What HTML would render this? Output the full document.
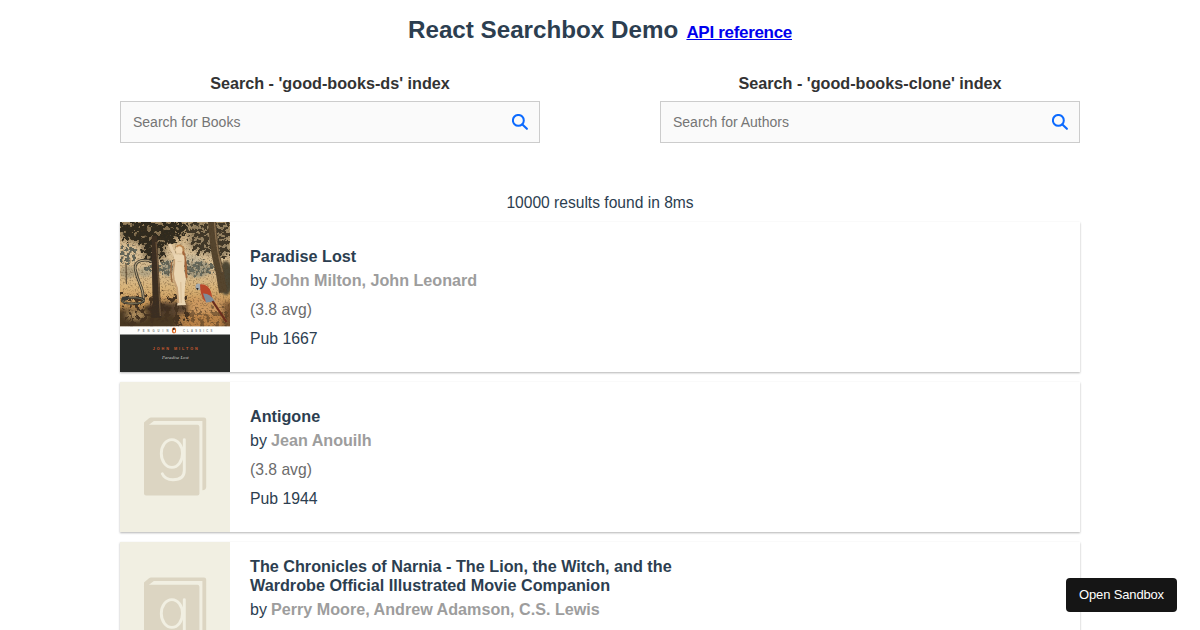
<!DOCTYPE html>
<html>
<head>
<meta charset="utf-8">
<title>React Searchbox Demo</title>
<style>
*{box-sizing:border-box;}
html,body{margin:0;padding:0;background:#fff;}
body{width:1200px;height:630px;overflow:hidden;position:relative;font-family:"Liberation Sans",sans-serif;color:#2c3e50;font-size:16px;}
h2{margin:0;position:absolute;left:0;width:1200px;top:16px;text-align:center;font-size:24.2px;line-height:28px;font-weight:bold;color:#2c3e50;white-space:nowrap;}
h2 a{font-size:17px;letter-spacing:-0.31px;color:#0000ee;text-decoration:underline;text-decoration-thickness:1.3px;font-weight:bold;margin-left:1.5px;}
.col{position:absolute;top:72px;width:420px;}
.col.l{left:120px;}
.col.r{left:660px;}
.col h3{margin:0;font-size:16.2px;line-height:22px;text-align:center;font-weight:bold;color:#333;white-space:nowrap;}
.inp{margin-top:7px;height:42px;border:1px solid #ccc;background:#fafafa;position:relative;}
.inp span{position:absolute;left:12px;top:0;line-height:40px;font-size:14px;color:#757575;}
.inp svg{position:absolute;right:9px;top:12px;}
.res{position:absolute;left:0;width:1200px;top:193px;text-align:center;line-height:20px;font-size:15.6px;color:#2c3e50;}
.card{position:absolute;left:120px;width:960px;height:150px;background:#fff;box-shadow:0 1px 2px 0 rgba(0,0,0,0.3);}
.card .img{position:absolute;left:0;top:0;width:110px;height:150px;background:#f1efe2;overflow:hidden;}
.card .img svg{display:block;}
.card .txt{position:absolute;left:130px;top:0;width:460px;}
.t{font-weight:bold;font-size:16.2px;line-height:19px;color:#2c3e50;}
.by{font-size:16px;line-height:19px;color:#2c3e50;margin-top:5px;}
.by b{color:#9d9d9d;font-size:16.15px;margin-left:-0.4px;}
.avg{font-size:15.7px;line-height:19px;color:#6b6b6b;margin-top:10px;}
.pub{font-size:15.8px;line-height:19px;color:#2c3e50;margin-top:10px;}
.sb{position:absolute;left:1066px;top:578px;width:111px;height:34px;background:#151515;border-radius:4px;color:#fff;font-size:13px;line-height:34px;text-align:center;letter-spacing:-0.15px;}
</style>
</head>
<body>
<h2>React Searchbox Demo <a>API reference</a></h2>
<div class="col l"><h3>Search - 'good-books-ds' index</h3><div class="inp"><span>Search for Books</span><svg width="18" height="18" viewBox="0 0 18 18"><circle cx="6.35" cy="6.4" r="5.45" fill="none" stroke="#0b6aff" stroke-width="2"/><path d="M10.4 10.4L14.9 14.8" stroke="#0b6aff" stroke-width="2.1" stroke-linecap="round"/></svg></div></div>
<div class="col r"><h3>Search - 'good-books-clone' index</h3><div class="inp"><span>Search for Authors</span><svg width="18" height="18" viewBox="0 0 18 18"><circle cx="6.35" cy="6.4" r="5.45" fill="none" stroke="#0b6aff" stroke-width="2"/><path d="M10.4 10.4L14.9 14.8" stroke="#0b6aff" stroke-width="2.1" stroke-linecap="round"/></svg></div></div>
<div class="res">10000 results found in 8ms</div>

<div class="card" style="top:222px"><div class="img" id="cover"><svg width="110" height="150" viewBox="0 0 110 150"><defs><filter id="b1" x="-20%" y="-20%" width="140%" height="140%"><feGaussianBlur stdDeviation="1.2"/></filter><filter id="b2" x="-20%" y="-20%" width="140%" height="140%"><feGaussianBlur stdDeviation="0.45"/></filter><filter id="b3" x="-30%" y="-30%" width="160%" height="160%"><feGaussianBlur stdDeviation="2.5"/></filter><filter id="lfA" x="-10%" y="-10%" width="120%" height="120%" color-interpolation-filters="sRGB"><feGaussianBlur in="SourceAlpha" stdDeviation="2" result="m"/><feTurbulence type="fractalNoise" baseFrequency="0.22" numOctaves="3" seed="11" result="n"/><feColorMatrix in="n" type="matrix" values="0 0 0 0 0  0 0 0 0 0  0 0 0 0 0  3 0 0 0 -1.0" result="na"/><feComposite in="na" in2="m" operator="arithmetic" k1="0" k2="1" k3="1" k4="-1" result="c"/><feColorMatrix in="c" type="matrix" values="0 0 0 0 0.19  0 0 0 0 0.17  0 0 0 0 0.12  0 0 0 7 -0.9"/></filter><filter id="lfB" x="-10%" y="-10%" width="120%" height="120%" color-interpolation-filters="sRGB"><feGaussianBlur in="SourceAlpha" stdDeviation="2" result="m"/><feTurbulence type="fractalNoise" baseFrequency="0.26" numOctaves="3" seed="23" result="n"/><feColorMatrix in="n" type="matrix" values="0 0 0 0 0  0 0 0 0 0  0 0 0 0 0  3 0 0 0 -1.2" result="na"/><feComposite in="na" in2="m" operator="arithmetic" k1="0" k2="1" k3="1" k4="-1" result="c"/><feColorMatrix in="c" type="matrix" values="0 0 0 0 0.25  0 0 0 0 0.22  0 0 0 0 0.16  0 0 0 7 -0.9"/></filter><filter id="lfC" x="-10%" y="-10%" width="120%" height="120%" color-interpolation-filters="sRGB"><feGaussianBlur in="SourceAlpha" stdDeviation="1.6" result="m"/><feTurbulence type="fractalNoise" baseFrequency="0.3" numOctaves="2" seed="5" result="n"/><feColorMatrix in="n" type="matrix" values="0 0 0 0 0  0 0 0 0 0  0 0 0 0 0  3 0 0 0 -1.25" result="na"/><feComposite in="na" in2="m" operator="arithmetic" k1="0" k2="1" k3="1" k4="-1" result="c"/><feColorMatrix in="c" type="matrix" values="0 0 0 0 0.40  0 0 0 0 0.41  0 0 0 0 0.36  0 0 0 6 -0.8"/></filter><filter id="lfD" x="-10%" y="-10%" width="120%" height="120%" color-interpolation-filters="sRGB"><feGaussianBlur in="SourceAlpha" stdDeviation="2" result="m"/><feTurbulence type="fractalNoise" baseFrequency="0.2" numOctaves="3" seed="31" result="n"/><feColorMatrix in="n" type="matrix" values="0 0 0 0 0  0 0 0 0 0  0 0 0 0 0  3 0 0 0 -1.4" result="na"/><feComposite in="na" in2="m" operator="arithmetic" k1="0" k2="1" k3="1" k4="-1" result="c"/><feColorMatrix in="c" type="matrix" values="0 0 0 0 0.27  0 0 0 0 0.20  0 0 0 0 0.13  0 0 0 6 -0.8"/></filter><filter id="grain" x="0" y="0" width="100%" height="100%" color-interpolation-filters="sRGB"><feTurbulence type="fractalNoise" baseFrequency="0.6" numOctaves="2" seed="3" result="n"/><feColorMatrix in="n" type="matrix" values="0 0 0 0 0.3  0 0 0 0 0.22  0 0 0 0 0.12  0 0 0 -4 2.0"/></filter><linearGradient id="sky" x1="0" y1="0" x2="0" y2="1"><stop offset="0" stop-color="#ccae80"/><stop offset="0.3" stop-color="#dac198"/><stop offset="0.5" stop-color="#d4b88b"/><stop offset="0.62" stop-color="#d9b47a"/><stop offset="0.76" stop-color="#cb9b5c"/><stop offset="1" stop-color="#9c6f3f"/></linearGradient><clipPath id="pc"><rect x="0" y="0" width="110" height="104.5"/></clipPath></defs><rect width="110" height="150" fill="#fff"/><g clip-path="url(#pc)"><rect width="110" height="105" fill="url(#sky)"/><!-- midground bluish trees --><g filter="url(#b1)" opacity="0.6"><ellipse cx="47" cy="46" rx="5.5" ry="8.5" fill="#8a8d80"/><ellipse cx="78" cy="47" rx="12" ry="8.5" fill="#85887a"/><ellipse cx="25" cy="50" rx="7" ry="5" fill="#a39d84"/><ellipse cx="8" cy="50" rx="8" ry="6" fill="#988f74"/><ellipse cx="72" cy="37" rx="10" ry="4" fill="#bdb59c"/></g><g fill="#000"><ellipse cx="62" cy="46" rx="40" ry="9" filter="url(#lfC)"/></g><!-- ground --><g filter="url(#b3)"><rect x="-5" y="87" width="62" height="24" fill="#4a3724"/><rect x="30" y="80" width="38" height="12" fill="#5a4530"/><rect x="70" y="76" width="34" height="16" fill="#cd9a60"/><rect x="64" y="92" width="40" height="16" fill="#ba8246"/><rect x="103" y="80" width="12" height="28" fill="#7a5532"/><ellipse cx="16" cy="93" rx="10" ry="4" fill="#b79564"/></g><g fill="#000"><rect x="0" y="70" width="70" height="36" filter="url(#lfD)"/><rect x="60" y="84" width="50" height="22" filter="url(#lfD)" opacity="0.5"/></g><!-- small left tree --><g fill="#000"><ellipse cx="8" cy="32" rx="10" ry="11" filter="url(#lfC)"/></g><path d="M6 42 L6.6 62" stroke="#6b5a42" stroke-width="1.4" filter="url(#b2)"/><!-- right-edge bush --><ellipse cx="106" cy="56" rx="7" ry="17" fill="#4d4635" filter="url(#b1)"/><!-- canopy --><g filter="url(#b3)" opacity="0.7"><path d="M0 0 L66 0 L66 12 L46 20 L45 36 L24 38 L21 22 L0 16 Z" fill="#65573d"/><path d="M68 0 L110 0 L110 34 L84 32 L70 26 Z" fill="#7d6e54"/></g><g fill="#000"><path d="M0 0 L66 0 L68 10 L58 20 L46 22 L45 36 L36 40 L24 38 L21 22 L8 20 L0 16 Z" filter="url(#lfA)"/><path d="M2 0 L62 0 L60 12 L40 16 L44 30 L34 36 L26 32 L24 16 L6 14 Z" filter="url(#lfA)" opacity="0.8"/><path d="M66 0 L110 0 L110 36 L100 38 L96 30 L84 34 L72 30 L68 16 Z" filter="url(#lfB)"/><ellipse cx="90" cy="12" rx="16" ry="9" filter="url(#lfB)" opacity="0.8"/></g><!-- trunks --><ellipse cx="38" cy="86" rx="14" ry="4" fill="#3e2f22" filter="url(#b1)" opacity="0.8"/><g filter="url(#b2)"><path d="M31.8 14 L37 14 L38.4 40 L40.6 80 L41.5 96 L31 96 L32.6 80 L31.8 40 Z" fill="#3a2d22"/><path d="M36 20 L37.6 40 L39.6 80 L40.4 94" stroke="#6e563b" stroke-width="1.3" fill="none"/><path d="M88 0 L96 0 L97.5 17 L100 33 L104 50 L107 70 L99 71 L96 52 L92 35 L89.5 17 Z" fill="#54442f"/><path d="M94.5 0 L96 17 L98.6 33 L102.5 50" stroke="#8a7150" stroke-width="1.4" fill="none"/></g><rect width="110" height="105" filter="url(#grain)" opacity="0.35"/><!-- snake --><g filter="url(#b2)" fill="none" stroke-linecap="round"><path d="M31 39.6 Q27 37.4 21 38.6 Q14.4 40.4 15.2 47 Q16.4 54 20 62 Q23.6 70 23.4 78" stroke="#3b382f" stroke-width="2.7"/><path d="M31 39.6 Q27 37.4 21 38.6 Q14.4 40.4 15.2 47 Q16.4 54 20 62 Q23.6 70 23.4 78" stroke="#b5a27e" stroke-width="1.1"/><ellipse cx="13" cy="78.6" rx="11" ry="3" stroke="#33312a" stroke-width="2.2"/><ellipse cx="13" cy="78.6" rx="11" ry="3" stroke="#8f8768" stroke-width="0.7"/><ellipse cx="5" cy="76.6" rx="3.4" ry="2" fill="#3a3a36" stroke="none"/></g><!-- figure --><g filter="url(#b2)"><path d="M63 29 Q66.4 40 66 56" stroke="#a4663b" stroke-width="2.4" fill="none"/><path d="M51.5 40 Q50 50 52 60" stroke="#9a6a42" stroke-width="1.4" fill="none"/><ellipse cx="59.3" cy="27.6" rx="3.4" ry="4.2" fill="#ecd3ad"/><path d="M56.4 25 Q59.3 21.4 63.3 25.6 L63.6 29" stroke="#bb8650" stroke-width="1.9" fill="none"/><path d="M55.6 35 Q52.6 29 50.2 23" stroke="#e6cfac" stroke-width="3" stroke-linecap="round" fill="none"/><path d="M53.6 33.4 Q58.5 31 64.2 33.6 Q65.2 39 64 45 Q63.8 48 65.2 52 Q66.6 57 65.2 63 Q64.4 70 64.6 78 L66 83 L57 83.4 L58 79 Q57.6 70 56 63 Q51.6 57 52.2 51 Q52.6 47 54.4 44 Q55 39 53.6 33.4 Z" fill="#ead5b2"/><path d="M54.2 37 Q54.6 42 53.6 46 Q52.4 52 54 58 L57 66 L58.4 81" stroke="#c7a276" stroke-width="1.8" fill="none"/><path d="M60.8 60 L61.2 81" stroke="#d6ba92" stroke-width="0.9" fill="none"/><path d="M57.5 39.5 L61.5 39.5" stroke="#d9bf9a" stroke-width="0.8"/></g><!-- parrot --><g filter="url(#b2)"><ellipse cx="78.6" cy="64.8" rx="3" ry="3.2" fill="#a3a9ac"/><path d="M76 66 L77.6 68.6 L78.6 66" fill="#2a2a2a"/><path d="M80 62.4 Q88 61.6 91 70 Q92.6 76 92 79 L85 79.5 Q81.4 75 80.4 68 Z" fill="#b9462a"/><path d="M83 71.5 Q90 71 95 79.5 L86 80.5 Z" fill="#7e8c98"/><path d="M92.5 79 L106.5 100" stroke="#6a2d1e" stroke-width="2.2"/></g></g><!-- white band --><rect x="0" y="104.5" width="110" height="8" fill="#fdfdfb"/><g font-family="Liberation Sans, sans-serif" font-weight="bold" font-size="27" fill="#7a7d7f"><text transform="translate(17.8 109.5) scale(0.1)" letter-spacing="30.5">PENGUIN</text><text transform="translate(62.9 109.5) scale(0.1)" letter-spacing="22.5">CLASSICS</text></g><ellipse cx="54" cy="108.4" rx="2.1" ry="2.9" fill="#e0661c"/><ellipse cx="54.2" cy="108.8" rx="0.9" ry="1.6" fill="#fff"/><ellipse cx="53.8" cy="106.9" rx="1" ry="1" fill="#2a2a2a"/><!-- dark panel --><rect x="0" y="112.5" width="110" height="37.5" fill="#272a28"/><text transform="translate(56.2 127.8) scale(0.1)" font-family="Liberation Sans, sans-serif" font-weight="bold" font-size="37" letter-spacing="20" text-anchor="middle" fill="#d05a2e">JOHN MILTON</text><text transform="translate(55.3 137) scale(0.1)" font-family="Liberation Serif, serif" font-style="italic" font-size="48" text-anchor="middle" fill="#d0d0ca">Paradise Lost</text></svg></div><div class="txt" style="top:25px"><div class="t">Paradise Lost</div><div class="by">by <b>John Milton, John Leonard</b></div><div class="avg">(3.8 avg)</div><div class="pub">Pub 1667</div></div></div>
<div class="card" style="top:382px"><div class="img"><svg width="110" height="150" viewBox="0 0 110 150"><rect width="110" height="150" fill="#f1efe2"/><path d="M24 45 L24 40.6 L29 36.2 Q29.8 35.5 31 35.5 L84 35.5 Q86.2 35.5 86.2 37.6 L86.2 105 Q86.2 107.8 82.4 108.3 L82.4 39 L33.8 39 L28.7 43 L24 45 Z" fill="#dcd5c2"/><rect x="24" y="42.8" width="55.4" height="70.8" rx="2" fill="#dcd5c2"/><g fill="none" stroke="#f1efe2" stroke-width="2.9" stroke-linecap="round"><ellipse cx="51.9" cy="71.5" rx="10.6" ry="13.9"/><path d="M64.3 57.6 L64.3 88.5 Q64.3 97.8 53 97.8 Q44.8 97.8 42.3 91.8"/></g></svg></div><div class="txt" style="top:25px"><div class="t">Antigone</div><div class="by">by <b>Jean Anouilh</b></div><div class="avg">(3.8 avg)</div><div class="pub">Pub 1944</div></div></div>
<div class="card" style="top:542px"><div class="img"><svg width="110" height="150" viewBox="0 0 110 150"><rect width="110" height="150" fill="#f1efe2"/><path d="M24 45 L24 40.6 L29 36.2 Q29.8 35.5 31 35.5 L84 35.5 Q86.2 35.5 86.2 37.6 L86.2 105 Q86.2 107.8 82.4 108.3 L82.4 39 L33.8 39 L28.7 43 L24 45 Z" fill="#dcd5c2"/><rect x="24" y="42.8" width="55.4" height="70.8" rx="2" fill="#dcd5c2"/><g fill="none" stroke="#f1efe2" stroke-width="2.9" stroke-linecap="round"><ellipse cx="51.9" cy="71.5" rx="10.6" ry="13.9"/><path d="M64.3 57.6 L64.3 88.5 Q64.3 97.8 53 97.8 Q44.8 97.8 42.3 91.8"/></g></svg></div><div class="txt" style="top:15px"><div class="t">The Chronicles of Narnia - The Lion, the Witch, and the Wardrobe Official Illustrated Movie Companion</div><div class="by">by <b>Perry Moore, Andrew Adamson, C.S. Lewis</b></div></div></div>
<div class="sb">Open Sandbox</div>
</body>
</html>
